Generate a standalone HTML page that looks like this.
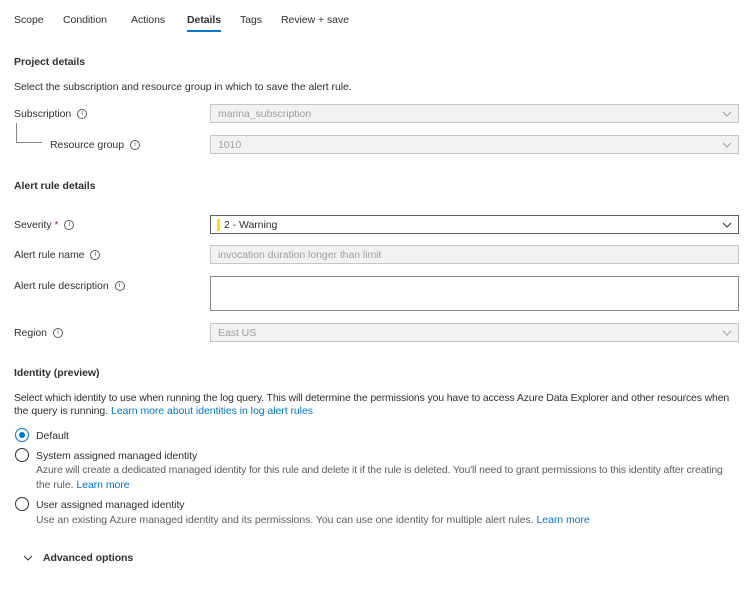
<!DOCTYPE html>
<html><head><style>
*{margin:0;padding:0;box-sizing:border-box}
body{width:750px;height:605px;background:#fff;font-family:"Liberation Sans",sans-serif;font-size:10.5px;letter-spacing:-0.05px;color:#323130;position:relative;overflow:hidden}
.a{position:absolute;white-space:nowrap;line-height:14px;margin-top:1px}
.b{font-weight:bold}
.in{position:absolute;left:210px;width:529px;height:19px;border:1px solid #c8c6c4;background:#f3f2f1;color:#a19f9d;padding:3px 7px;line-height:13px}
.chev{position:absolute;right:6px;top:5px}
.i{display:inline-block;width:10px;height:10px;border:1px solid #605e5c;border-radius:50%;font-size:7px;line-height:8px;text-align:center;vertical-align:middle;margin-left:6px;color:#605e5c;letter-spacing:0}
.r{position:absolute;left:15px;width:14px;height:14px;border:1px solid #323130;border-radius:50%}
a{color:#0078d4;text-decoration:none}
</style></head><body>
<div class="a" style="left:14px;top:12px">Scope</div>
<div class="a" style="left:63px;top:12px">Condition</div>
<div class="a" style="left:131px;top:12px">Actions</div>
<div class="a b" style="left:187px;top:12px">Details</div>
<div style="position:absolute;left:187px;top:30px;width:34px;height:2px;background:#0078d4"></div>
<div class="a" style="left:240px;top:12px">Tags</div>
<div class="a" style="left:281px;top:12px">Review + save</div>

<div class="a b" style="left:14px;top:54px">Project details</div>
<div class="a" style="left:14px;top:79px">Select the subscription and resource group in which to save the alert rule.</div>
<div class="a" style="left:14px;top:106px">Subscription<span class="i">i</span></div>
<div class="in" style="top:104px">marina_subscription<svg class="chev" width="10" height="8"><path d="M1 2l4 4 4-4" stroke="#a19f9d" fill="none"/></svg></div>
<div style="position:absolute;left:16px;top:123px;width:26px;height:20px;border-left:1px solid #8a8886;border-bottom:1px solid #8a8886"></div>
<div class="a" style="left:50px;top:137px">Resource group<span class="i">i</span></div>
<div class="in" style="top:135px">1010<svg class="chev" width="10" height="8"><path d="M1 2l4 4 4-4" stroke="#a19f9d" fill="none"/></svg></div>

<div class="a b" style="left:14px;top:178px">Alert rule details</div>
<div class="a" style="left:14px;top:217px">Severity <span style="color:#a4262c">*</span><span class="i">i</span></div>
<div class="in" style="top:215px;background:#fff;border-color:#605e5c;color:#323130;padding-left:13px">2 - Warning<div style="position:absolute;left:6px;top:3px;width:3px;height:12px;background:#fce100"></div><svg class="chev" width="10" height="8"><path d="M1 2l4 4 4-4" stroke="#323130" fill="none"/></svg></div>
<div class="a" style="left:14px;top:247px">Alert rule name<span class="i">i</span></div>
<div class="in" style="top:245px">invocation duration longer than limit</div>
<div class="a" style="left:14px;top:278px">Alert rule description<span class="i">i</span></div>
<div class="in" style="top:276px;height:35px;background:#fff;border-color:#8a8886"></div>
<div class="a" style="left:14px;top:325px">Region<span class="i">i</span></div>
<div class="in" style="top:323px">East US<svg class="chev" width="10" height="8"><path d="M1 2l4 4 4-4" stroke="#a19f9d" fill="none"/></svg></div>

<div class="a b" style="left:14px;top:365px">Identity (preview)</div>
<div class="a" style="left:14px;top:390px;letter-spacing:-0.15px">Select which identity to use when running the log query. This will determine the permissions you have to access Azure Data Explorer and other resources when</div>
<div class="a" style="left:14px;top:403px">the query is running. <a>Learn more about identities in log alert rules</a></div>
<div class="r" style="top:428px;border-color:#0078d4"><div style="position:absolute;left:3px;top:3px;width:6px;height:6px;border-radius:50%;background:#0078d4"></div></div>
<div class="a" style="left:36px;top:428px">Default</div>
<div class="r" style="top:448px"></div>
<div class="a" style="left:36px;top:448px">System assigned managed identity</div>
<div class="a" style="left:36px;top:462px;color:#605e5c;letter-spacing:-0.15px">Azure will create a dedicated managed identity for this rule and delete it if the rule is deleted. You'll need to grant permissions to this identity after creating</div>
<div class="a" style="left:36px;top:477px;color:#605e5c">the rule. <a>Learn more</a></div>
<div class="r" style="top:497px"></div>
<div class="a" style="left:36px;top:497px">User assigned managed identity</div>
<div class="a" style="left:36px;top:512px;color:#605e5c">Use an existing Azure managed identity and its permissions. You can use one identity for multiple alert rules. <a>Learn more</a></div>
<svg style="position:absolute;left:23px;top:555px" width="10" height="7"><path d="M1 1l4 4 4-4" stroke="#323130" fill="none"/></svg>
<div class="a b" style="left:43px;top:550px">Advanced options</div>
</body></html>
